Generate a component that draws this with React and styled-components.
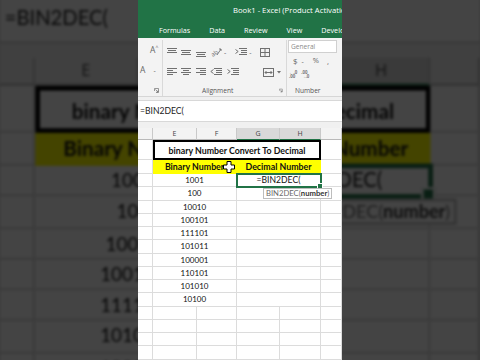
import React from "react";
import styled, { createGlobalStyle } from "styled-components";

const Global = createGlobalStyle`
  html, body { margin: 0; padding: 0; background: #2e2e2e; }
  body { width: 480px; height: 360px; overflow: hidden; font-family: Lato, "Open Sans", sans-serif; }
`;

const COLS = "15px 44px 40px 43px 41px 21px";
const GREEN = "#217346";
const GRID = "#dcdcdc";

const Stage = styled.div`
  width: 480px;
  height: 360px;
  overflow: hidden;
  display: grid;
  place-items: center;
  background: #3a3a3a;
`;

const Backdrop = styled.div`
  grid-area: 1 / 1;
  transform: scale(2.353);
  filter: brightness(0.265) blur(0.6px);
`;

const Strip = styled.div`
  grid-area: 1 / 1;
  position: relative;
  z-index: 1;
`;

const Window = styled.div`
  width: 204px;
  height: 360px;
  overflow: hidden;
  background: #fff;
  display: flex;
  flex-direction: column;
  font-family: Lato, "Open Sans", sans-serif;
`;

/* ---------- title bar ---------- */
const TitleBar = styled.div`
  height: 38px;
  flex: none;
  background: ${GREEN};
  color: #fff;
  font-family: "Open Sans", "Noto Sans", sans-serif;
  display: flex;
  flex-direction: column;
`;
const TitleText = styled.div`
  height: 21px;
  padding-left: 95px;
  font-size: 7.7px;
  line-height: 21px;
  white-space: nowrap;
  overflow: hidden;
`;
const TabRow = styled.div`
  height: 17px;
  display: flex;
  align-items: center;
  gap: 19px;
  padding-left: 21px;
  font-size: 7.2px;
  white-space: nowrap;
`;
const Tab = styled.span``;

/* ---------- ribbon ---------- */
const Ribbon = styled.div`
  height: 59px;
  flex: none;
  box-sizing: border-box;
  background: #f3f3f3;
  border-bottom: 1px solid #d6d6d6;
  display: flex;
  padding-top: 2px;
  color: #666;
  font-family: "Open Sans", "Noto Sans", sans-serif;
`;
const Group = styled.div`
  width: ${(p) => p.$w}px;
  flex: none;
  box-sizing: border-box;
  display: flex;
  flex-direction: column;
  border-right: ${(p) => (p.$sep ? "1px solid #d9d9d9" : "none")};
`;
const GroupBody = styled.div`
  flex: 1;
  display: flex;
  flex-direction: column;
  gap: ${(p) => p.$gap}px;
  padding-top: ${(p) => p.$pt}px;
`;
const ToolRow = styled.div`
  height: ${(p) => p.$h || 12}px;
  display: flex;
  align-items: center;
  padding-left: ${(p) => p.$pl || 0}px;
`;
const Tool = styled.span`
  display: inline-flex;
  align-items: center;
  justify-content: center;
  align-self: ${(p) => (p.$raised ? "flex-start" : "auto")};
  margin-top: ${(p) => (p.$raised ? 1 : 0)}px;
  margin-left: ${(p) => p.$ml || 0}px;
  color: #666;
  font-size: ${(p) => p.$fs || 8}px;
  line-height: 1;
`;
const GroupFoot = styled.div`
  height: 11px;
  display: flex;
  align-items: center;
  justify-content: ${(p) => p.$justify || "flex-start"};
  padding-left: ${(p) => p.$pl || 0}px;
  padding-right: 3px;
  font-size: 6.6px;
  color: #555;
  gap: ${(p) => p.$gap || 0}px;
`;
const FormatBox = styled.div`
  width: 49px;
  height: 13px;
  box-sizing: border-box;
  background: #fff;
  border: 1px solid #d0d0d0;
  margin-left: 1px;
  font-size: 6.6px;
  color: #8a8a8a;
  padding-left: 2px;
  line-height: 11px;
`;
const DecStack = styled.span`
  display: inline-flex;
  flex-direction: column;
  font-size: 4.4px;
  line-height: 4px;
  color: #777;
  margin-left: ${(p) => p.$ml || 0}px;
  font-weight: 700;
`;

/* ---------- formula bar ---------- */
const FormulaArea = styled.div`
  height: 31px;
  flex: none;
  box-sizing: border-box;
  background: #f0f0f0;
  padding: 3px 0 6px;
`;
const FormulaBox = styled.div`
  height: 22px;
  box-sizing: border-box;
  background: #fff;
  border-top: 1px solid #d8d8d8;
  border-bottom: 1px solid #d8d8d8;
  padding-left: 2px;
  font-size: 8.6px;
  line-height: 20px;
  color: #222;
`;

/* ---------- sheet ---------- */
const Sheet = styled.div`
  flex: 1;
  position: relative;
`;
const HeaderRow = styled.div`
  display: grid;
  grid-template-columns: ${COLS};
  height: 12px;
`;
const ColHead = styled.div`
  box-sizing: border-box;
  border-right: 1px solid #c9c9c9;
  border-bottom: 1px solid ${(p) => (p.$sel ? GREEN : "#b9b9b9")};
  background: ${(p) => (p.$sel ? "#d9d9d9" : "#f3f3f3")};
  font-family: "Open Sans", "Noto Sans", sans-serif;
  font-size: 7px;
  color: #444;
  text-align: center;
  line-height: 11px;
`;
const Row = styled.div`
  display: grid;
  grid-template-columns: ${COLS};
  height: ${(p) => p.$h}px;
`;
const Cell = styled.div`
  box-sizing: border-box;
  grid-column: span ${(p) => p.$span || 1};
  border-right: 1px solid ${(p) => p.$line || GRID};
  border-bottom: 1px solid ${(p) => p.$line || GRID};
  background: ${(p) => p.$fill || "#fff"};
  display: flex;
  align-items: center;
  justify-content: center;
  font-size: ${(p) => p.$fs || 8}px;
  font-weight: ${(p) => (p.$bold ? 700 : 400)};
  color: #111;
  white-space: nowrap;
  position: relative;
`;
const TitleCell = styled(Cell)`
  border: 2px solid #000;
`;
const SelectedCell = styled(Cell)`
  outline: 2px solid ${GREEN};
  outline-offset: -1px;
  z-index: 2;
`;
const FillHandle = styled.span`
  position: absolute;
  right: -3px;
  bottom: -3px;
  width: 4px;
  height: 4px;
  background: ${GREEN};
  border: 1px solid #fff;
`;
const Tip = styled.div`
  position: absolute;
  left: 125px;
  top: 60px;
  height: 11px;
  box-sizing: border-box;
  padding: 0 2px;
  background: #fff;
  border: 1px solid #bdbdbd;
  font-size: 7.7px;
  line-height: 9px;
  color: #6a6a6a;
  white-space: nowrap;
  z-index: 3;
`;
const TipArg = styled.b`
  color: #333;
`;
const Cursor = styled.svg`
  position: absolute;
  left: 85px;
  top: 33px;
  z-index: 4;
`;

const Icon = ({ w = 10, h = 9, children }) => (
  <svg width={w} height={h} viewBox={`0 0 ${w} ${h}`} fill="none" stroke="#707070" strokeWidth="1">
    {children}
  </svg>
);

const lines = (ys, xs) =>
  ys.map((y, i) => <line key={i} x1={xs[i][0]} x2={xs[i][1]} y1={y + 0.5} y2={y + 0.5} />);

const AlignV = ({ pos }) => {
  const base = pos === "top" ? 0 : pos === "mid" ? 2 : 4;
  return (
    <Icon w={10} h={9}>
      {lines([base, base + 2, base + 4], [[0, 10], [1, 9], [0, 10]])}
    </Icon>
  );
};
const AlignH = ({ pos }) => {
  const xs =
    pos === "left"
      ? [[0, 10], [0, 6], [0, 10], [0, 6]]
      : pos === "center"
      ? [[0, 10], [2, 8], [0, 10], [2, 8]]
      : [[0, 10], [4, 10], [0, 10], [4, 10]];
  return <Icon w={10} h={8}>{lines([0, 2, 4, 6], xs)}</Icon>;
};
const Indent = ({ dir }) => (
  <Icon w={12} h={8}>
    {lines([0, 2, 4, 6], [[4, 12], [6, 12], [6, 12], [4, 12]])}
    {dir === "dec" ? <path d="M3.5 1.5 L0.8 3.5 L3.5 5.5" /> : <path d="M0.5 1.5 L3.2 3.5 L0.5 5.5" />}
  </Icon>
);
const Orientation = () => (
  <svg width="11" height="10" viewBox="0 0 11 10">
    <text x="0" y="8" fontSize="6" fill="#707070" fontFamily="Open Sans" transform="rotate(-35 4 6)">ab</text>
    <path d="M6 8 L10 2 M8 2 H10 V4" stroke="#707070" strokeWidth="0.9" fill="none" />
  </svg>
);
const Merge = () => (
  <Icon w={11} h={9}>
    <rect x="0.5" y="0.5" width="10" height="8" />
    <path d="M2 4.5 H9 M3.5 3 L2 4.5 L3.5 6 M7.5 3 L9 4.5 L7.5 6" />
  </Icon>
);
const Grid = () => (
  <Icon w={10} h={9}>
    <rect x="0.5" y="0.5" width="9" height="8" />
    <line x1="0.5" x2="9.5" y1="4.5" y2="4.5" />
    <line x1="5" x2="5" y1="0.5" y2="8.5" />
  </Icon>
);
const Launcher = () => (
  <Icon w={5} h={5}>
    <path d="M0.5 3 V0.5 H4.5 V4.5 H2 M1.5 1.5 L4 4 M4 2.5 V4 H2.5" strokeWidth="0.7" />
  </Icon>
);
const Caret = () => (
  <svg width="4" height="3" viewBox="0 0 4 3">
    <path d="M0 0 H4 L2 2.5 Z" fill="#707070" />
  </svg>
);

const DATA = ["100", "10010", "100101", "111101", "101011", "100001", "110101", "101010", "10100"];
const RH = 13.25;

const Excel = () => (
  <Window>
    <TitleBar>
      <TitleText>Book1 - Excel (Product Activation Failed)</TitleText>
      <TabRow>
        <Tab>Formulas</Tab>
        <Tab>Data</Tab>
        <Tab>Review</Tab>
        <Tab>View</Tab>
        <Tab>Developer</Tab>
      </TabRow>
    </TitleBar>

    <Ribbon>
      <Group $w={25} $sep>
        <GroupBody $pt={4} $gap={8}>
          <ToolRow $pl={12}>
            <Tool $fs={8.5}>A</Tool>
            <Tool $fs={5} $raised>^</Tool>
          </ToolRow>
          <ToolRow $pl={2}>
            <Tool $fs={8.5}>A</Tool>
            <Tool $ml={8} $fs={7}>-</Tool>
          </ToolRow>
        </GroupBody>
        <GroupFoot $justify="flex-end">
          <Launcher />
        </GroupFoot>
      </Group>

      <Group $w={124} $sep>
        <GroupBody $pt={6} $gap={8}>
          <ToolRow $pl={4}>
            <Tool><AlignV pos="top" /></Tool>
            <Tool $ml={4}><AlignV pos="mid" /></Tool>
            <Tool $ml={5}><AlignV pos="bot" /></Tool>
            <Tool $ml={5}><Orientation /></Tool>
            <Tool $ml={2} $fs={7}>-</Tool>
            <Tool $ml={9}><Indent dir="inc" /></Tool>
            <Tool $ml={2} $fs={7}>-</Tool>
            <Tool $ml={8}><Grid /></Tool>
          </ToolRow>
          <ToolRow $pl={4}>
            <Tool><AlignH pos="left" /></Tool>
            <Tool $ml={4}><AlignH pos="center" /></Tool>
            <Tool $ml={5}><AlignH pos="right" /></Tool>
            <Tool $ml={4}><Indent dir="dec" /></Tool>
            <Tool $ml={5}><Indent dir="inc" /></Tool>
            <Tool $ml={24}><Merge /></Tool>
            <Tool $ml={3}><Caret /></Tool>
          </ToolRow>
        </GroupBody>
        <GroupFoot $pl={39} $gap={46}>
          <span>Alignment</span>
          <Launcher />
        </GroupFoot>
      </Group>

      <Group $w={55}>
        <GroupBody $pt={0} $gap={3}>
          <FormatBox>General</FormatBox>
          <ToolRow $pl={6} $h={10}>
            <Tool $fs={8}>$</Tool>
            <Tool $ml={4} $fs={7}>-</Tool>
            <Tool $ml={9} $fs={7.5}>%</Tool>
            <Tool $ml={8} $fs={8}>,</Tool>
          </ToolRow>
          <ToolRow $pl={2} $h={10}>
            <DecStack><span>←.0</span><span>.00</span></DecStack>
            <DecStack $ml={4}><span>.00</span><span>→.0</span></DecStack>
          </ToolRow>
        </GroupBody>
        <GroupFoot $pl={8}>
          <span>Number</span>
        </GroupFoot>
      </Group>
    </Ribbon>

    <FormulaArea>
      <FormulaBox>=BIN2DEC(</FormulaBox>
    </FormulaArea>

    <Sheet>
      <HeaderRow>
        <ColHead />
        <ColHead>E</ColHead>
        <ColHead>F</ColHead>
        <ColHead $sel>G</ColHead>
        <ColHead $sel>H</ColHead>
        <ColHead />
      </HeaderRow>

      <Row $h={20}>
        <Cell />
        <TitleCell $span={4} $bold $fs={8.8}>binary Number Convert To Decimal</TitleCell>
        <Cell />
      </Row>

      <Row $h={14}>
        <Cell />
        <Cell $span={2} $fill="#ffff00" $line="#ffff00" $bold $fs={8.8}>Binary Number</Cell>
        <Cell $span={2} $fill="#ffff00" $line="#ffff00" $bold $fs={8.8}>Decimal Number</Cell>
        <Cell />
      </Row>

      <Row $h={RH}>
        <Cell />
        <Cell $span={2}>1001</Cell>
        <SelectedCell $span={2} $fs={8.6}>
          =BIN2DEC(
          <FillHandle />
        </SelectedCell>
        <Cell />
      </Row>

      {DATA.map((v) => (
        <Row $h={RH} key={v}>
          <Cell />
          <Cell $span={2}>{v}</Cell>
          <Cell $span={2} />
          <Cell />
        </Row>
      ))}

      {[0, 1, 2, 3, 4].map((i) => (
        <Row $h={RH} key={"e" + i}>
          <Cell />
          <Cell />
          <Cell />
          <Cell />
          <Cell />
          <Cell />
        </Row>
      ))}

      <Tip>
        BIN2DEC(<TipArg>number</TipArg>)
      </Tip>

      <Cursor width="12" height="12" viewBox="0 0 12 12">
        <path
          d="M4 0.5 H8 V4 H11.5 V8 H8 V11.5 H4 V8 H0.5 V4 H4 Z"
          fill="#fff"
          stroke="#000"
          strokeWidth="1"
        />
      </Cursor>
    </Sheet>
  </Window>
);

export default function App() {
  return (
    <>
      <Global />
      <Stage>
        <Backdrop aria-hidden="true">
          <Excel />
        </Backdrop>
        <Strip>
          <Excel />
        </Strip>
      </Stage>
    </>
  );
}
